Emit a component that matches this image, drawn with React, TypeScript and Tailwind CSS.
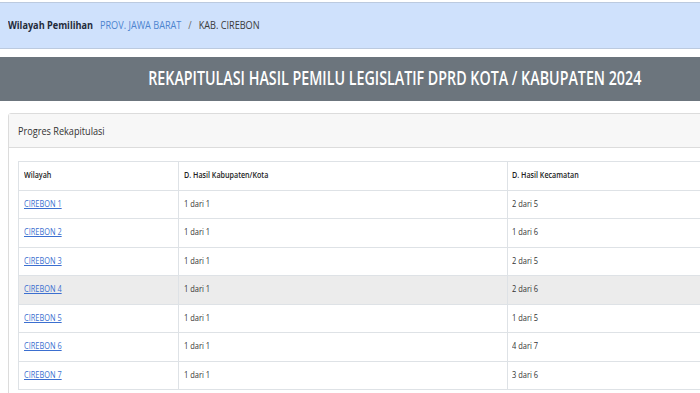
import React from "react";

const rows = [
  { w: "CIREBON 1", k: "1 dari 1", c: "2 dari 5" },
  { w: "CIREBON 2", k: "1 dari 1", c: "1 dari 6" },
  { w: "CIREBON 3", k: "1 dari 1", c: "2 dari 5" },
  { w: "CIREBON 4", k: "1 dari 1", c: "2 dari 6", hl: true },
  { w: "CIREBON 5", k: "1 dari 1", c: "1 dari 5" },
  { w: "CIREBON 6", k: "1 dari 1", c: "4 dari 7" },
  { w: "CIREBON 7", k: "1 dari 1", c: "3 dari 6" },
];

export default function App() {
  return (
    <div
      className="w-[700px] h-[393px] overflow-hidden bg-white"
      style={{ fontFamily: '"Open Sans", "Noto Sans", sans-serif' }}
    >
      <div className="w-[789px] pt-[2px]">
        {/* breadcrumb */}
        <div className="h-[47px] border-y border-[#bccadf] bg-[#cfe1fc] flex items-center pl-[8px]">
          <span className="inline-block origin-left scale-x-[0.87] whitespace-nowrap text-[10.5px] leading-none">
            <span className="font-bold text-[#1f2a3a]">Wilayah Pemilihan</span>
            <span className="ml-[8px] text-[#4d84cf]">PROV. JAWA BARAT</span>
            <span className="mx-[8px] text-[#666]">/</span>
            <span className="text-[#3a3a3a]">KAB. CIREBON</span>
          </span>
        </div>

        {/* banner */}
        <div className="mt-[8px] h-[44px] bg-[#6c757d] flex items-center justify-center">
          <span className="inline-block scale-x-[0.713] whitespace-nowrap text-white font-semibold text-[20px] leading-none -translate-y-[1px]">
            REKAPITULASI HASIL PEMILU LEGISLATIF DPRD KOTA / KABUPATEN 2024
          </span>
        </div>

        {/* card */}
        <div className="mt-[12px] mx-[8px] border border-[#dcdcdc] rounded-[3px]">
          <div className="h-[34px] bg-[#f7f7f7] border-b border-[#dcdcdc] flex items-center pl-[9px]">
            <span className="inline-block origin-left scale-x-[0.83] whitespace-nowrap text-[11px] text-[#333] leading-none">
              Progres Rekapitulasi
            </span>
          </div>
          <div className="px-[9px] pt-[13px] pb-[12px]">
            <table className="w-full border-collapse text-[8.5px] text-[#333]">
              <colgroup>
                <col className="w-[160px]" />
                <col className="w-[329px]" />
                <col />
              </colgroup>
              <thead>
                <tr className="h-[28.5px]">
                  <th className="border border-[#dee2e6] text-left font-semibold pl-[5px] text-[#222]">
                    <span className="inline-block origin-left scale-x-[0.84] whitespace-nowrap">Wilayah</span>
                  </th>
                  <th className="border border-[#dee2e6] text-left font-semibold pl-[5px] text-[#222]">
                    <span className="inline-block origin-left scale-x-[0.84] whitespace-nowrap">D. Hasil Kabupaten/Kota</span>
                  </th>
                  <th className="border border-[#dee2e6] text-left font-semibold pl-[4px] text-[#222]">
                    <span className="inline-block origin-left scale-x-[0.84] whitespace-nowrap">D. Hasil Kecamatan</span>
                  </th>
                </tr>
              </thead>
              <tbody>
                {rows.map((r) => (
                  <tr key={r.w} className={`h-[28.5px] ${r.hl ? "bg-[#ececec]" : ""}`}>
                    <td className="border border-[#dee2e6] pl-[5px]">
                      <a href="#" className="inline-block origin-left scale-x-[0.87] whitespace-nowrap text-[#3b6fd0] underline">
                        {r.w}
                      </a>
                    </td>
                    <td className="border border-[#dee2e6] pl-[5px]">
                      <span className="inline-block origin-left scale-x-[0.88] whitespace-nowrap">{r.k}</span>
                    </td>
                    <td className="border border-[#dee2e6] pl-[4px]">
                      <span className="inline-block origin-left scale-x-[0.88] whitespace-nowrap">{r.c}</span>
                    </td>
                  </tr>
                ))}
              </tbody>
            </table>
          </div>
        </div>
      </div>
    </div>
  );
}
